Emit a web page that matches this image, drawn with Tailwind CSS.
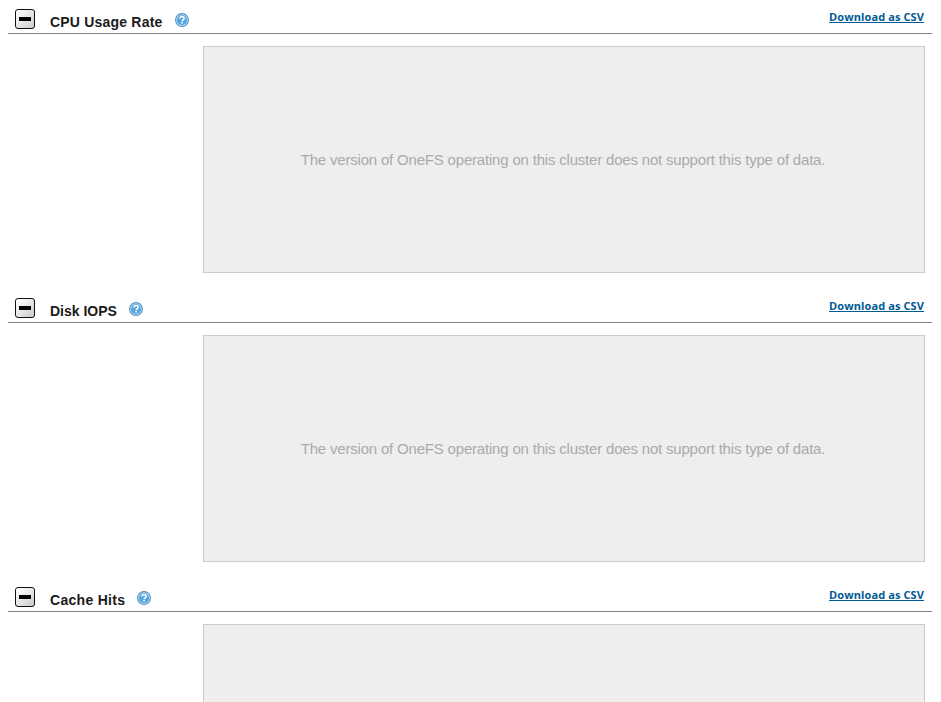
<!DOCTYPE html>
<html>
<head>
  <meta charset="utf-8">
  <title>Cluster Performance</title>
  <script src="https://cdn.jsdelivr.net/npm/@tailwindcss/browser@4"></script>
</head>
<body class="bg-white overflow-hidden h-screen">
  <div id="charts" class="h-screen overflow-hidden flex flex-col pl-2 pr-[9px] font-['Liberation_Sans',Arial,sans-serif]"></div>

  <script>
    const unsupported = 'The version of OneFS operating on this cluster does not support this type of data.';

    const sections = [
      { title: 'CPU Usage Rate', tracking: 'tracking-[0.2px]', size: 'h-[289px] shrink-0', message: unsupported },
      { title: 'Disk IOPS', tracking: 'tracking-normal', size: 'h-[289px] shrink-0', message: unsupported },
      { title: 'Cache Hits', tracking: 'tracking-[0.3px]', size: 'flex-1 min-h-0 overflow-hidden', message: '' }
    ];

    function renderSection({ title, tracking, size, message }) {
      return `
        <section class="${size}">
          <!-- Section header -->
          <div class="flex items-start h-[34px] border-b border-[#808080] pl-[7px] pr-2">
            <button class="mt-[9px] w-5 h-5 shrink-0" aria-label="Collapse">
              <svg viewBox="0 0 20 20" class="w-5 h-5">
                <defs>
                  <linearGradient id="btn" x1="0" y1="0" x2="1" y2="1">
                    <stop offset="0.1" stop-color="#fff" />
                    <stop offset="1" stop-color="#c8c8c8" />
                  </linearGradient>
                </defs>
                <rect x=".5" y=".5" width="19" height="19" rx="2.5" fill="url(#btn)" stroke="#111" />
                <rect x="4" y="8" width="12" height="4" fill="#000" />
              </svg>
            </button>
            <h2 class="ml-[15px] mt-[12px] text-[14px] leading-5 font-bold text-[#1a1a1a] whitespace-nowrap ${tracking}">${title}</h2>
            <svg viewBox="0 0 14 14" class="ml-3 mt-[13px] w-3.5 h-3.5 shrink-0">
              <defs>
                <linearGradient id="help" x1="0" y1="0" x2="0" y2="1">
                  <stop offset="0" stop-color="#6aa8d8" />
                  <stop offset="1" stop-color="#45a3e0" />
                </linearGradient>
              </defs>
              <circle cx="7" cy="7" r="6.4" fill="#c5e0f3" stroke="#4f93c6" stroke-width="1.1" />
              <circle cx="7" cy="7" r="5.1" fill="url(#help)" />
              <path d="M4.9 5.6c0-2.7 4.2-2.6 4.2-.1 0 1.3-2 1.3-2 2.8" fill="none" stroke="#fff" stroke-width="1.5" />
              <rect x="6.3" y="9" width="1.6" height="1.6" fill="#fff" />
            </svg>
            <a href="#" class="ml-auto mt-[9px] text-[11px] leading-4 font-bold underline tracking-[0.1px] text-[#005a94] whitespace-nowrap font-['Open_Sans',Tahoma,sans-serif]">Download as CSV</a>
          </div>
          <!-- Chart placeholder -->
          <div class="ml-[195px] mr-[7px] mt-3 h-[227px] flex items-center justify-center pt-0.5 pr-0.5 bg-[#eee] border border-[#ccc] text-[15px] tracking-[-0.193px] text-[#aaa] whitespace-nowrap">${message}</div>
        </section>
      `;
    }

    document.getElementById('charts').innerHTML = sections.map(renderSection).join('');
  </script>
</body>
</html>
